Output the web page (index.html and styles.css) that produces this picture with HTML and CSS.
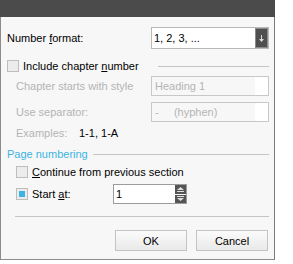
FILE: index.html
```html
<!DOCTYPE html>
<html lang="en">
<head>
    <meta charset="UTF-8">
    <title>Page Number Format</title>
    <link rel="stylesheet" href="styles.css">
</head>
<body>
    <div class="dialog">
        <div class="titlebar"></div>
        <div class="content">
            <div class="row row-format">
                <span class="label">Number <u>f</u>ormat:</span>
                <div class="select">
                    <span class="select-value">1, 2, 3, ...</span>
                    <span class="drop-button">
                        <svg width="7" height="9" viewBox="0 0 7 9"><path d="M3 1h1v4h2l-2.5 3L1 5h2z" fill="#d8d8d8"/></svg>
                    </span>
                </div>
            </div>

            <div class="row row-check">
                <span class="checkbox"></span>
                <span class="check-label">Include chapter <u>n</u>umber</span>
                <span class="rule"></span>
            </div>

            <div class="row row-field indent first-field">
                <span class="label disabled">Chapter starts with style</span>
                <div class="field disabled-field">
                    <span class="field-value">Heading 1</span>
                    <span class="field-end"></span>
                </div>
            </div>

            <div class="row row-field indent second-field">
                <span class="label disabled">Use separator:</span>
                <div class="field disabled-field">
                    <span class="field-value">-&nbsp;&nbsp;&nbsp;&nbsp;&nbsp;(hyphen)</span>
                    <span class="field-end"></span>
                </div>
            </div>

            <div class="row row-examples indent">
                <span class="disabled examples-label">Examples:</span>
                <span>1-1, 1-A</span>
            </div>

            <div class="row row-group">
                <span class="group-title">Page numbering</span>
                <span class="rule"></span>
            </div>

            <div class="row row-check indent continue-row">
                <span class="checkbox"></span>
                <span class="check-label"><u>C</u>ontinue from previous section</span>
            </div>

            <div class="row row-start indent">
                <span class="checkbox checked"></span>
                <span class="check-label start-label">Start <u>a</u>t:</span>
                <div class="spin">
                    <span class="spin-value">1</span>
                    <span class="spin-buttons">
                        <span class="spin-btn">
                            <svg width="7" height="5" viewBox="0 0 7 5"><path d="M3.5 0L7 3H0z M0 4h7v1H0z" fill="#e0e0e0"/></svg>
                        </span>
                        <span class="spin-btn">
                            <svg width="7" height="5" viewBox="0 0 7 5"><path d="M0 0h7v1H0z M0 2h7L3.5 5z" fill="#e0e0e0"/></svg>
                        </span>
                    </span>
                </div>
            </div>

            <div class="separator"></div>

            <div class="buttons">
                <button class="button">OK</button>
                <button class="button">Cancel</button>
            </div>
        </div>
    </div>
</body>
</html>
```

FILE: styles.css
```css
body {
    margin: 0;
    background: #ffffff;
    font-family: "Liberation Sans", Arial, sans-serif;
    font-size: 11px;
    color: #000000;
}
.dialog {
    width: 273px;
    height: 259px;
    border: 1px solid #8c8c8c;
    border-top: none;
    border-right-color: #7a7a7a;
    background: #f7f7f7;
    display: flex;
    flex-direction: column;
}
.titlebar {
    height: 17px;
    margin: 0 -1px;
    background: #4b4b4b;
}
.content {
    padding: 0 5px 0 6px;
    display: flex;
    flex-direction: column;
}
.row {
    display: flex;
    align-items: center;
}
.indent {
    padding-left: 9px;
}
.row-format {
    height: 22px;
    margin-top: 10px;
}
.label {
    flex: 1;
}
.disabled {
    color: #b4b4b4;
}
.select {
    width: 116px;
    height: 20px;
    border: 1px solid #b9b9b9;
    background: #ffffff;
    display: flex;
    align-items: center;
}
.select-value {
    flex: 1;
    padding-left: 2px;
}
.drop-button {
    width: 11px;
    height: 18px;
    border: 1px solid #8a8a8a;
    background: #4f4f4f;
    display: flex;
    align-items: center;
    justify-content: center;
}
.row-check {
    height: 12px;
    margin-top: 11px;
}
.checkbox {
    width: 10px;
    height: 10px;
    border: 1px solid #bdbdbd;
    background: #ececec;
    margin-right: 4px;
    display: flex;
    align-items: center;
    justify-content: center;
}
.checked::after {
    content: "";
    width: 6px;
    height: 6px;
    background: #3bb4e2;
}
.rule {
    flex: 1;
    height: 1px;
    background: #c4c4c4;
    margin-left: 5px;
}
.row-check .rule {
    margin-left: 19px;
}
.row-field {
    height: 20px;
}
.first-field {
    margin-top: 4px;
}
.second-field {
    margin-top: 6px;
}
.field {
    width: 116px;
    height: 18px;
    border: 1px solid #c8c8c8;
    display: flex;
    align-items: center;
}
.disabled-field {
    background: #f7f7f7;
    color: #b4b4b4;
}
.field-value {
    flex: 1;
    padding-left: 3px;
}
.field-end {
    width: 13px;
    height: 18px;
    background: #ffffff;
}
.row-examples {
    height: 14px;
    margin-top: 4px;
}
.examples-label {
    width: 63px;
}
.row-group {
    height: 14px;
    margin-top: 7px;
}
.group-title {
    color: #3bb4e2;
}
.continue-row {
    margin-top: 5px;
}
.row-start {
    height: 20px;
    margin-top: 6px;
}
.start-label {
    width: 81px;
}
.spin {
    width: 72px;
    height: 18px;
    border: 1px solid #9c9c9c;
    background: #ffffff;
    display: flex;
    align-items: center;
}
.spin-value {
    flex: 1;
    padding-left: 2px;
}
.spin-buttons {
    width: 11px;
    height: 18px;
    display: flex;
    flex-direction: column;
    gap: 1px;
    background: #f7f7f7;
}
.spin-btn {
    flex: 1;
    background: #555555;
    display: flex;
    align-items: center;
    justify-content: center;
}
.separator {
    height: 1px;
    background: #c4c4c4;
    margin: 12px 0 0 8px;
}
.buttons {
    display: flex;
    justify-content: flex-end;
    gap: 9px;
    margin-top: 13px;
    padding-right: 1px;
}
.button {
    width: 72px;
    height: 21px;
    border: 1px solid #c4c4c4;
    background: linear-gradient(#fbfbfb, #e9e9e9);
    font-family: "Liberation Sans", Arial, sans-serif;
    font-size: 11px;
    color: #000000;
    padding: 0;
}
```
